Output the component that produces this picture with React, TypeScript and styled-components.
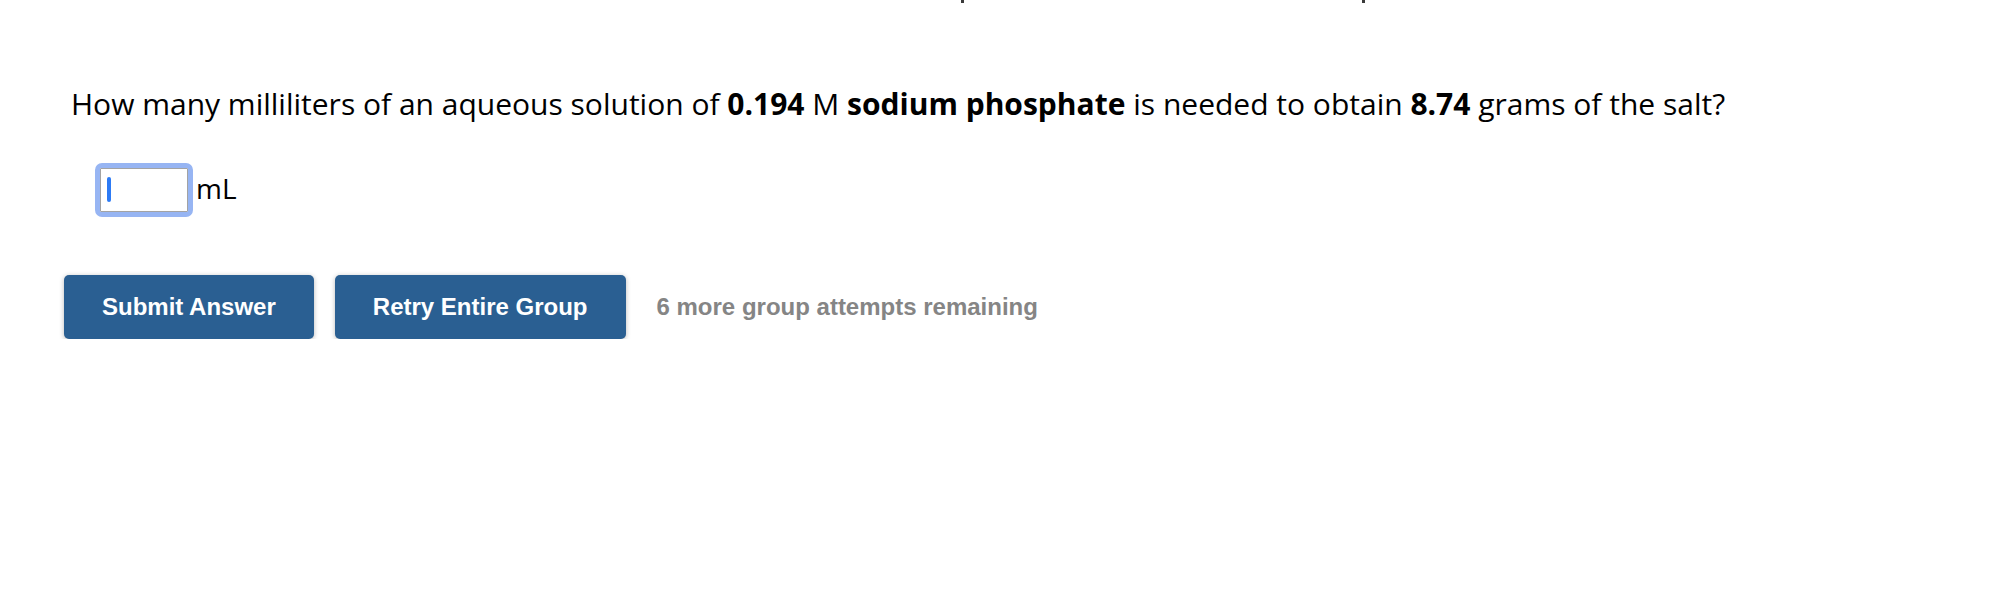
import React from 'react';
import styled, { createGlobalStyle } from 'styled-components';

const GlobalStyle = createGlobalStyle`
  html, body {
    margin: 0;
    padding: 0;
    background: #ffffff;
  }
  body {
    font-family: "Open Sans", "Liberation Sans", sans-serif;
    color: #000;
  }
`;

const TopClip = styled.div`
  height: 4px;
  display: flex;
  align-items: flex-start;
`;

const Tick = styled.span<{ $offset: number }>`
  display: block;
  width: 3px;
  height: 3px;
  margin-left: ${(p) => p.$offset}px;
  background: #3a3a3a;
`;

const Page = styled.main`
  padding: 80px 0 0 64px;
`;

const Question = styled.p`
  margin: 0 0 39px 7px;
  font-family: "Open Sans", sans-serif;
  font-size: 30px;
  line-height: 40px;
  color: #000;

  strong {
    font-weight: 700;
  }
`;

const AnswerRow = styled.div`
  display: flex;
  align-items: center;
  margin-left: 31px;
  height: 54px;
  gap: 3px;
`;

const FieldWrap = styled.div`
  position: relative;
  display: inline-flex;
  border: 5px solid #97b5f3;
  border-radius: 7px;
`;

const AnswerInput = styled.input`
  box-sizing: border-box;
  width: 88px;
  height: 44px;
  margin: 0;
  padding: 0 8px;
  border: 1px solid #a3a3a3;
  border-radius: 1px;
  outline: none;
  caret-color: transparent;
  font-family: "Open Sans", sans-serif;
  font-size: 22px;
  background: #fff;
`;

const Caret = styled.span`
  position: absolute;
  left: 7px;
  top: 9px;
  width: 4px;
  height: 25px;
  border-radius: 2px;
  background: #2d7bf5;
`;

const Unit = styled.span`
  margin-bottom: 4px;
  font-family: "Open Sans", sans-serif;
  font-size: 28px;
  color: #000;
`;

const ActionRow = styled.div`
  display: flex;
  align-items: center;
  margin-top: 58px;
  gap: 21px;
`;

const ActionButton = styled.button`
  height: 64px;
  padding: 0 38px;
  border: none;
  border-radius: 5px;
  background: #2a5f92;
  color: #fff;
  font-family: "Liberation Sans", Arial, sans-serif;
  font-weight: 700;
  font-size: 24px;
  box-shadow: 0 1px 5px rgba(0, 0, 0, 0.28);
  cursor: pointer;
`;

const Attempts = styled.span`
  margin-left: 10px;
  font-family: "Liberation Sans", Arial, sans-serif;
  font-weight: 700;
  font-size: 24px;
  color: #858585;
`;

export default function App() {
  return (
    <>
      <GlobalStyle />
      <TopClip>
        <Tick $offset={961} />
        <Tick $offset={398} />
      </TopClip>
      <Page>
        <Question>
          How many milliliters of an aqueous solution of <strong>0.194</strong> M{' '}
          <strong>sodium phosphate</strong> is needed to obtain <strong>8.74</strong> grams of
          the salt?
        </Question>
        <AnswerRow>
          <FieldWrap>
            <AnswerInput type="text" aria-label="answer" />
            <Caret />
          </FieldWrap>
          <Unit>mL</Unit>
        </AnswerRow>
        <ActionRow>
          <ActionButton>Submit Answer</ActionButton>
          <ActionButton>Retry Entire Group</ActionButton>
          <Attempts>6 more group attempts remaining</Attempts>
        </ActionRow>
      </Page>
    </>
  );
}
